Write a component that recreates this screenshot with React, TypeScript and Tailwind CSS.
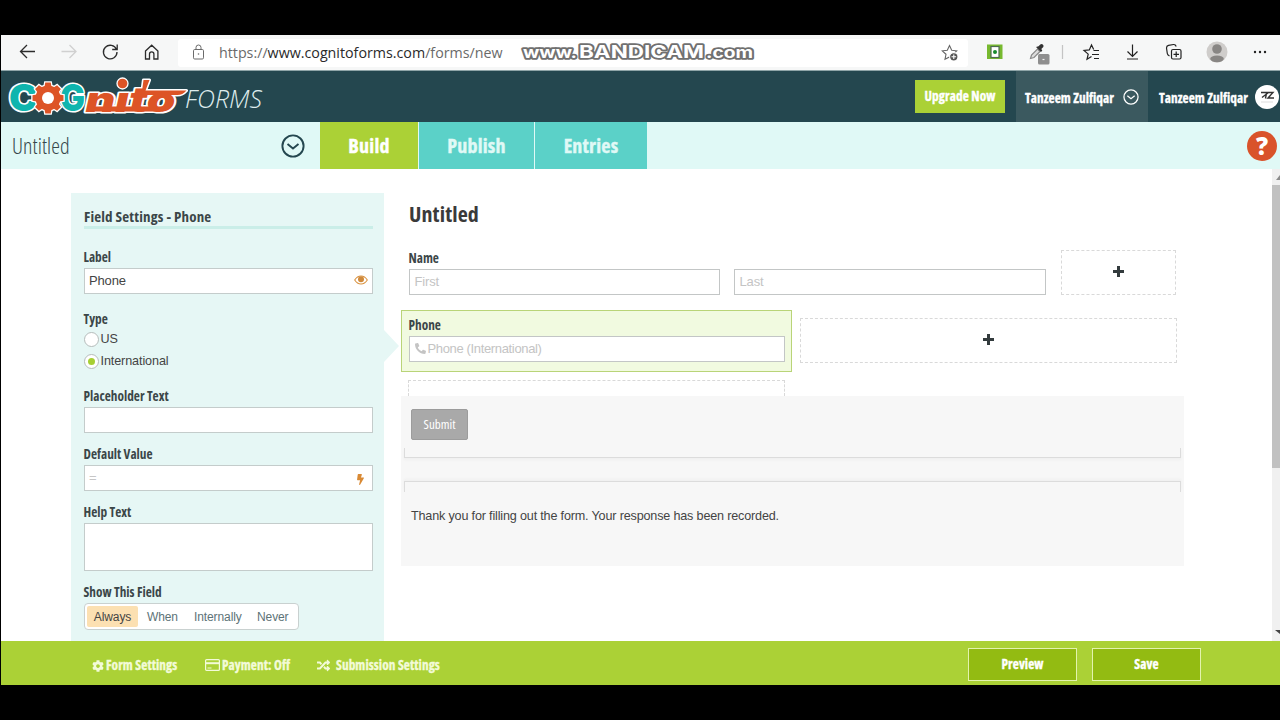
import React from "react";
import { FaBolt, FaCog, FaRandom, FaPhone } from "react-icons/fa";

const cond = "font-['Open_Sans'] [font-stretch:75%]";
const label = `${cond} -ml-[0.5px] block font-bold text-[13.3px] leading-4 text-[#3b4648] whitespace-nowrap`;

const teeth = [0, 45, 90, 135, 180, 225, 270, 315];
const swoosh = "M142.500 80h6l-4 10.500h41q-4 4.500-9 4.500h-36zM86 106.500h80q-4 5-9 5H88z";

function Logo() {
  return (
    <svg width="266" height="51" viewBox="0 71 266 51" className="block shrink-0">
      <path d={swoosh} fill="#fff" stroke="#fff" strokeWidth="3.200" strokeLinejoin="round" />
      <g stroke="#fff" strokeWidth="3.200" strokeLinejoin="round" paintOrder="stroke" fontFamily="Inter, sans-serif" fontWeight="900">
        <text x="8" y="111" fill="#0fb5ae" fontSize="36.500" textLength="29" lengthAdjust="spacingAndGlyphs">C</text>
        <text x="59" y="111" fill="#0fb5ae" fontSize="36.500" textLength="25" lengthAdjust="spacingAndGlyphs">G</text>
        <text x="84.500" y="111.500" fill="#dd5426" fontStyle="italic" fontSize="34" textLength="90" lengthAdjust="spacingAndGlyphs">nıto</text>
      </g>
      <path d={swoosh} fill="#dd5426" />
      <circle cx="121.500" cy="83.500" r="5.500" fill="#dd5426" stroke="#fff" strokeWidth="1.300" />
      <g fill="#fff" stroke="#fff" strokeWidth="2.600">
        <circle cx="47" cy="98" r="12.500" />
        {teeth.map((a) => (
          <path key={a} d="M43.300 88l1-5.500h5.400l1 5.500z" transform={`rotate(${a} 47 98)`} />
        ))}
      </g>
      <g fill="#dd5426">
        <circle cx="47" cy="98" r="12.500" />
        {teeth.map((a) => (
          <path key={a} d="M43.300 88l1-5.500h5.400l1 5.500z" transform={`rotate(${a} 47 98)`} />
        ))}
      </g>
      <circle cx="47" cy="98" r="6" fill="#fff" />
      <text x="184" y="107.500" fill="#dfeced" fontFamily="Open Sans, sans-serif" fontWeight="300" fontStyle="italic" fontSize="25" textLength="77" lengthAdjust="spacingAndGlyphs">FORMS</text>
    </svg>
  );
}

function BrowserBar() {
  return (
    <div className="flex h-[36px] shrink-0 items-center border-b border-[#8fa5a8] bg-[#f6f7f7]">
      <svg width="177" height="35" viewBox="1 35 177 35" fill="none" stroke="#2c2c2c" strokeWidth="1.300" className="shrink-0">
        <path d="M35 51.500H20.500M27 45l-6.500 6.500L27 58" />
        <path d="M61.500 51.500H76M69.500 45l6.500 6.500-6.500 6.500" stroke="#d0d0d0" />
        <path d="M116.500 49.500a6.800 6.800 0 1 0 .5 2.500M117.200 44.500v5h-5" />
        <path d="M145.500 51l6.200-5.800 6.200 5.800v8h-4v-5a2.200 2.200 0 0 0-4.400 0v5h-4z" />
      </svg>
      <div className="flex h-[28px] w-[790px] shrink-0 items-center rounded-[3px] bg-white">
        <svg width="41" height="28" viewBox="178 38 41 28" fill="none" stroke="#6b6b6b" className="shrink-0">
          <rect x="193.500" y="48.500" width="10" height="9.500" rx="1.200" />
          <path d="M196 48.500v-2a2.500 2.500 0 0 1 5 0v2" />
          <circle cx="198.500" cy="53" r=".8" fill="#6b6b6b" stroke="none" />
        </svg>
        <span className="w-[301px] shrink-0 whitespace-nowrap font-['Open_Sans'] text-[14.25px] text-[#6a6a6a]">
          https://<span className="text-[#2a2a2a]">www.cognitoforms.com</span>/forms/new
        </span>
        <svg width="238" height="28" viewBox="520 38 238 28" className="shrink-0">
          <g fontFamily="Inter, sans-serif" fontWeight="700" fill="#fff" stroke="#707070" strokeWidth="3.400" strokeLinejoin="round" paintOrder="stroke">
            <text x="523" y="56.500" fontSize="15.500" textLength="54" lengthAdjust="spacingAndGlyphs">www.</text>
            <text x="579" y="56.500" fontSize="18" textLength="125" lengthAdjust="spacingAndGlyphs">BANDICAM</text>
            <text x="706" y="56.500" fontSize="15" textLength="47" lengthAdjust="spacingAndGlyphs">.com</text>
          </g>
        </svg>
        <svg width="26" height="28" viewBox="938 38 26 28" fill="none" stroke="#666" strokeWidth="1.100" className="mr-[4px] ml-auto">
          <path d="M949.500 44.500l2.200 4.700 5 .6-3.700 3.500 1 5-4.500-2.400-4.500 2.400 1-5-3.700-3.500 5-.6z" />
          <circle cx="953.800" cy="55.800" r="4.200" fill="#555" stroke="#fff" />
          <path d="M951.500 55.800h4.600M953.800 53.500v4.600" stroke="#fff" />
        </svg>
      </div>
      <svg width="312" height="35" viewBox="968 35 312 35" fill="none" stroke="#222" strokeWidth="1.200" className="shrink-0">
        <rect x="987" y="44.500" width="15.500" height="14.500" fill="#77b92f" stroke="none" />
        <rect x="991" y="46.500" width="8" height="11" fill="#fff" stroke="#4d6b50" />
        <circle cx="995" cy="52" r="2" fill="#178a2c" stroke="none" />
        <path d="M1030.500 58.500l1-3.500 6-6 2.500 2.500-6 6z" fill="#ddd" stroke="#888" />
        <path d="M1036 47l5 5 1.300-1.500-1-1.500 2-2q.8-1.500-.5-2.500t-2.500 0l-1.800 1.700z" fill="#333" stroke="none" />
        <rect x="1038" y="54" width="11.500" height="10.500" rx="1.500" fill="#8e8e8e" stroke="none" />
        <path d="M1042.500 59.500h2" stroke="#eee" />
        <path d="M1062.500 45v14" stroke="#c4c4c4" />
        <path d="M1091.500 56.500l-4.500 2.800 1.200-5.200-4.200-3.600 5.300-.6 2.200-5 2.200 4.600M1093.500 50.500h5.500M1092 54.500h7M1094 58.500h5" />
        <path d="M1132.500 44.500v11.500M1127.500 51.500l5 5 5-5M1127 59h11" />
        <rect x="1171.500" y="49.500" width="9.500" height="9.500" rx="1.500" />
        <path d="M1176.200 51.500v5.500M1173.500 54.300h5.500M1169.500 56q-2-1-2.200-2.500l-.8-5.500q0-2.200 2-2.600l5-.9q2-.2 2.700 2" />
        <circle cx="1217" cy="52" r="10.500" fill="#cfcdcb" stroke="none" />
        <circle cx="1217" cy="49" r="4.800" fill="#888684" stroke="none" />
        <ellipse cx="1217" cy="58.800" rx="6.800" ry="3.400" fill="#888684" stroke="none" />
        <g fill="#222" stroke="none">
          <circle cx="1255" cy="52" r="1.200" />
          <circle cx="1260" cy="52" r="1.200" />
          <circle cx="1265" cy="52" r="1.200" />
        </g>
      </svg>
    </div>
  );
}

function CircleDown({ size, className }: { size: number; className: string }) {
  return (
    <svg width={size} height={size} viewBox="0 0 24 24" fill="none" stroke="currentColor" strokeWidth="1.900" className={className}>
      <circle cx="12" cy="12" r="10.600" />
      <path d="M6.500 10l5.500 4.500 5.500-4.500" />
    </svg>
  );
}

function Header() {
  return (
    <header className="flex h-[51px] shrink-0 bg-[#24474f] text-white">
      <Logo />
      <div className={`${cond} ml-auto flex items-center text-[13.3px] font-bold [-webkit-text-stroke:0.35px]`}>
        <div className="mr-[11px] flex h-[33px] w-[90px] items-center justify-center bg-[#abd136] pt-px tracking-[0.1px] whitespace-nowrap">Upgrade Now</div>
        <div className="flex h-full w-[132px] items-center bg-[#3b595f] pl-[9px] whitespace-nowrap">
          <span className="w-[98px] pt-[4px] tracking-[0.05px]">Tanzeem Zulfiqar</span>
          <CircleDown size={16} className="text-white" />
        </div>
        <div className="flex h-full w-[132px] items-center overflow-hidden pl-[11px] whitespace-nowrap">
          <span className="w-[96px] shrink-0 pt-[4px] tracking-[0.05px]">Tanzeem Zulfiqar</span>
          <svg width="24" height="24" viewBox="0 0 24 24" className="mt-px shrink-0">
            <circle cx="12" cy="12" r="12" fill="#fff" />
            <path d="M6 7.500h7.500L7 12.500M11.500 8l-1 5.500M12.500 7.500h5.500l-5 5.500h6" fill="none" stroke="#333" strokeWidth="1.400" />
            <path d="M6.500 17h11" stroke="#bbb" strokeDasharray="1 1" />
          </svg>
        </div>
      </div>
    </header>
  );
}

function TabBar() {
  return (
    <div className="flex h-[47px] shrink-0 items-center bg-[#e0f9f6]">
      <div className="flex w-[319px] items-center pl-[11px]">
        <span className={`${cond} w-[269px] -translate-y-px text-[22px] leading-8 font-light tracking-[0.1px] text-[#36484b]`}>Untitled</span>
        <CircleDown size={24} className="mt-px text-[#24474f]" />
      </div>
      <nav className={`${cond} flex h-full gap-px text-[20px] font-bold tracking-[0.2px] text-[#e0f9f6] [-webkit-text-stroke:0.4px]`}>
        <span className="flex w-[98px] items-center justify-center bg-[#abd136] text-white">Build</span>
        <span className="flex w-[115px] items-center justify-center bg-[#5bd1c8]">Publish</span>
        <span className="flex w-[112px] items-center justify-center bg-[#5bd1c8]">Entries</span>
      </nav>
      <div className="mr-[3px] ml-auto flex size-[30px] items-center justify-center rounded-full bg-[#d9532a] font-['Open_Sans'] text-[24px] font-extrabold text-white">?</div>
    </div>
  );
}

const box = "flex items-center border border-[#c4cccb] bg-white text-[13px] tracking-[-0.15px] font-['Liberation_Sans'] leading-4";
const radioRow = "flex h-[14px] items-center gap-[1.5px] font-['Liberation_Sans'] text-[12.6px] tracking-[-0.1px] text-[#444]";

function Settings() {
  return (
    <aside className="relative h-[448px] w-[313px] shrink-0 bg-[#e6f7f5] pr-[11px] pl-[13px]">
      <div className={`${cond} h-[36px] border-b-[3px] border-[#caeee8] pt-[12px] text-[15px] leading-[22px] font-bold tracking-[0.17px] whitespace-nowrap text-[#3b4648]`}>Field Settings - Phone</div>
      <span className={`${label} mt-[20px]`}>Label</span>
      <div className={`${box} mt-[3px] h-[26px] justify-between pr-[4px] pl-[4px] text-[#444]`}>
        Phone
        <svg width="14" height="10" viewBox="0 0 14 10" fill="none" stroke="#d9923f" className="-translate-y-px">
          <path d="M.7 5Q3.200 1 7 1t6.300 4Q10.800 9 7 9T.7 5z" strokeWidth="1.100" />
          <circle cx="7" cy="4.300" r="3" fill="#d08a3c" stroke="none" />
        </svg>
      </div>
      <span className={`${label} mt-[17px]`}>Type</span>
      <div className={`${radioRow} mt-[5px]`}>
        <i className="size-[15px] rounded-full border border-[#b5bcbb] bg-white" />US
      </div>
      <div className={`${radioRow} mt-[8px]`}>
        <i className="flex size-[15px] items-center justify-center rounded-full border border-[#b5bcbb] bg-white">
          <i className="size-[7px] rounded-full bg-[#a6cf33]" />
        </i>
        International
      </div>
      <span className={`${label} mt-[20px]`}>Placeholder Text</span>
      <div className={`${box} mt-[3px] h-[26px]`} />
      <span className={`${label} mt-[13px]`}>Default Value</span>
      <div className={`${box} mt-[3px] h-[26px] justify-between pr-[6px] pl-[4px] text-[#c6c6c6]`}>
        =
        <FaBolt size={11} className="translate-y-px text-[#d98a35]" />
      </div>
      <span className={`${label} mt-[13px]`}>Help Text</span>
      <div className={`${box} mt-[3px] h-[48px]`} />
      <span className={`${label} mt-[13px]`}>Show This Field</span>
      <div className="mt-[3px] flex h-[27px] w-[215px] items-center rounded-[4px] border border-[#c9d1d0] bg-white font-['Liberation_Sans'] text-[12px] tracking-[-0.1px] text-[#5d7377]">
        <span className="ml-[2px] flex h-[21px] w-[51px] items-center justify-center rounded-[2px] bg-[#fce0b2] text-[#444]">Always</span>
        <span className="ml-[9px] w-[47px]">When</span>
        <span className="w-[63px]">Internally</span>
        <span>Never</span>
      </div>
      <svg width="15" height="32" viewBox="0 0 15 32" className="absolute top-[137px] left-[313px]">
        <path d="M0 0l15 16L0 32z" fill="#e6f7f5" />
      </svg>
    </aside>
  );
}

function Plus() {
  return (
    <svg width="11" height="11" viewBox="0 0 11 11" className="-translate-y-px">
      <path d="M4 0h3v4h4v3H7v4H4V7H0V4h4z" fill="#333b3d" />
    </svg>
  );
}

function FormCanvas() {
  const dash = "flex border border-dashed border-[#d9d9d9]";
  const field = "flex h-[26px] items-center border border-[#c3c6c6] bg-white pl-[4.5px] font-['Liberation_Sans'] text-[13px] tracking-[-0.15px] text-[#c4c4c4]";
  return (
    <section className="ml-[17px] flex w-[783px] flex-col">
      <h1 className={`${cond} mt-[4px] pl-[8px] text-[22px] leading-[32px] font-bold tracking-[0.1px] text-[#3a3a3a]`}>Untitled</h1>
      <div className="mt-[21px] flex h-[45px] pl-[8px]">
        <div className="w-[311px]">
          <span className={label}>Name</span>
          <div className={`${field} mt-[3px]`}>First</div>
        </div>
        <div className="ml-[14px] w-[312px] pt-[19px]">
          <div className={field}>Last</div>
        </div>
        <div className={`${dash} ml-[15px] h-[45px] w-[115px] items-center justify-center`}><Plus /></div>
      </div>
      <div className="mt-[15px] flex h-[62px]">
        <div className="w-[391px] shrink-0 border border-[#b9d478] bg-[#f1fae0] px-[7px] pt-[6px]">
          <span className={label}>Phone</span>
          <div className={`${field} mt-[3px] w-[376px] gap-[2px]`}>
            <FaPhone size={11} className="-translate-y-px -scale-x-100" />
            <span className="tracking-[-0.35px]">Phone (International)</span>
          </div>
        </div>
        <div className={`${dash} mt-[8px] ml-[8px] h-[45px] w-[377px] items-center justify-center`}><Plus /></div>
      </div>
      <div className="mt-[8px] ml-[7px] h-[16px] w-[377px] border border-b-0 border-dashed border-[#d9d9d9]" />
      <div className="h-[170px] bg-[#f7f7f7] px-[3px]">
        <div className="pt-[13px] pl-[7px]">
          <span className={`${cond} flex h-[31px] w-[57px] items-center justify-center rounded-[2px] border border-[#9c9c9c] bg-[#a9a9a9] pt-px text-[13px] text-white`}>Submit</span>
        </div>
        <div className="mt-[8px] h-[10px] border border-t-0 border-[#dcdcdc] shadow-[0_2px_2px_#f0f0f0]" />
        <div className="mt-[23px] h-[11px] border border-b-0 border-[#dcdcdc] shadow-[0_-2px_2px_#f0f0f0]" />
        <p className="mt-[16px] pl-[7px] font-['Liberation_Sans'] text-[12.6px] leading-4 tracking-[-0.17px] whitespace-nowrap text-[#444]">Thank you for filling out the form. Your response has been recorded.</p>
      </div>
    </section>
  );
}

function Footer() {
  const button = "flex h-[33px] w-[109px] -translate-y-[2px] items-center justify-center border border-[#e3f3ae] bg-[#93bb12] pt-[2px] text-white";
  return (
    <footer className={`${cond} flex h-[44px] shrink-0 items-center bg-[#abd136] pt-[6px] text-[13.3px] font-bold tracking-[0.08px] whitespace-nowrap text-[#f3fbd8] [-webkit-text-stroke:0.35px]`}>
      <span className="ml-[91px] flex w-[113px] items-center gap-[2px]"><FaCog size={12} />Form Settings</span>
      <span className="flex w-[112px] items-center gap-[2px]">
        <svg width="15" height="12" viewBox="0 0 15 12" fill="none" stroke="currentColor" className="-translate-y-px">
          <rect x=".6" y=".6" width="13.800" height="10.800" rx="1" strokeWidth="1.200" />
          <path d="M1 4.200h13" strokeWidth="2" />
          <path d="M2.500 9h4" />
        </svg>
        Payment: Off
      </span>
      <span className="flex items-center gap-[6px]"><FaRandom size={13} className="-translate-y-px" />Submission Settings</span>
      <span className={`${button} ml-auto`}>Preview</span>
      <span className={`${button} mr-[79px] ml-[15px]`}>Save</span>
    </footer>
  );
}

export default function App() {
  return (
    <div className="flex h-[720px] w-[1280px] flex-col overflow-hidden bg-black py-[35px] pl-px">
      <BrowserBar />
      <Header />
      <TabBar />
      <main className="flex min-h-0 flex-1 bg-white">
        <div className="flex flex-1 pt-[24px] pl-[70px]">
          <Settings />
          <FormCanvas />
        </div>
        <div className="flex w-[8px] flex-col items-end bg-[#f0f0f0]">
          <svg width="5" height="16" viewBox="0 0 5 16"><path d="M1 11l4-5v5z" fill="#8b8b8b" /></svg>
          <div className="h-[283px] w-[8px] bg-[#c1c1c1]" />
          <svg width="5" height="16" viewBox="0 0 5 16" className="mt-auto"><path d="M0 5h5v4z" fill="#444" /></svg>
        </div>
      </main>
      <Footer />
    </div>
  );
}
